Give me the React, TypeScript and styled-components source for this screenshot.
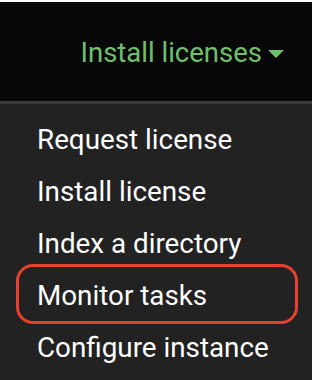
import styled, { createGlobalStyle } from 'styled-components';

const GlobalStyle = createGlobalStyle`
  html, body {
    margin: 0;
    padding: 0;
    background: #222222;
  }
  body {
    font-family: Roboto, "Liberation Sans", sans-serif;
    -webkit-font-smoothing: antialiased;
  }
`;

const items = [
  'Request license',
  'Install license',
  'Index a directory',
  'Monitor tasks',
  'Configure instance',
];

export default () => (
  <>
    <GlobalStyle />
    <StyledPage>
      <StyledHeader>
        <StyledToggle>
          Install licenses
          <StyledCaret />
        </StyledToggle>
      </StyledHeader>
      <StyledMenu>
        {items.map((item) => (
          <StyledItem key={item} $highlighted={item === 'Monitor tasks'}>
            {item}
          </StyledItem>
        ))}
      </StyledMenu>
    </StyledPage>
  </>
);

const StyledPage = styled.div`
  width: 312px;
  height: 380px;
  border-top: 2px solid #ffffff;
  box-sizing: border-box;
  background: #222222;
  overflow: hidden;
`;

const StyledHeader = styled.header`
  display: flex;
  justify-content: flex-end;
  align-items: center;
  height: 99px;
  padding-right: 28px;
  background: #070707;
  border-bottom: 3px solid #3a3a3a;
`;

const StyledToggle = styled.div`
  display: flex;
  align-items: center;
  gap: 6px;
  color: #6fc06b;
  font-size: 27.5px;
  line-height: 1;
  margin-top: 2px;
`;

const StyledCaret = styled.span`
  width: 0;
  height: 0;
  border-left: 8px solid transparent;
  border-right: 8px solid transparent;
  border-top: 8px solid #6fc06b;
  margin-top: 2px;
`;

const StyledMenu = styled.ul`
  list-style: none;
  margin: 0;
  padding: 10px 0 0 0;
  display: flex;
  flex-direction: column;
`;

const StyledItem = styled.li<{ $highlighted?: boolean }>`
  position: relative;
  height: 52px;
  display: flex;
  align-items: center;
  padding-left: 37px;
  color: #ffffff;
  font-size: 27.8px;
  line-height: 1;

  &::after {
    content: '';
    display: ${({ $highlighted }) => ($highlighted ? 'block' : 'none')};
    position: absolute;
    left: 16px;
    right: 14px;
    top: -6px;
    bottom: -2px;
    border: 3px solid #e8412c;
    border-radius: 17px;
  }
`;
